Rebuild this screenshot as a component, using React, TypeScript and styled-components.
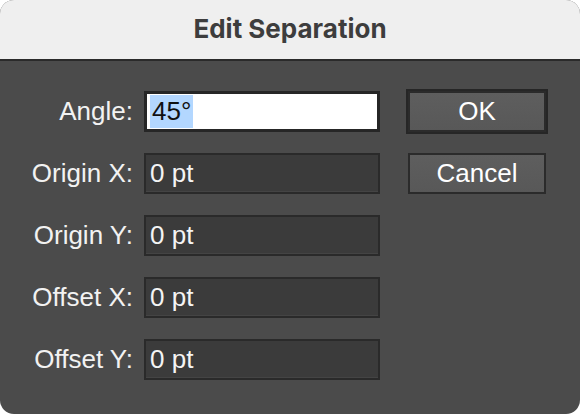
import React from "react";
import styled, { createGlobalStyle } from "styled-components";

const GlobalStyle = createGlobalStyle`
  html, body {
    margin: 0;
    padding: 0;
    background: #ffffff;
  }
  body {
    font-family: "Liberation Sans", Arial, sans-serif;
  }
`;

const Dialog = styled.div`
  width: 580px;
  height: 414px;
  border-radius: 14px;
  overflow: hidden;
  background: #4b4b4b;
  display: flex;
  flex-direction: column;
`;

const TitleBar = styled.div`
  height: 56px;
  flex: none;
  background: #efefef;
  border-bottom: 2px solid #2a2a2a;
  display: flex;
  align-items: center;
  justify-content: center;
  font-family: Inter, Roboto, "Liberation Sans", sans-serif;
  font-weight: 700;
  font-size: 26px;
  color: #3d3d3d;
  padding-bottom: 3px;
`;

const Body = styled.div`
  display: flex;
  align-items: flex-start;
  padding: 30px 0 0 8px;
`;

const Form = styled.div`
  display: grid;
  grid-template-columns: 125px 236px;
  column-gap: 11px;
  row-gap: 21px;
`;

const Label = styled.label`
  align-self: center;
  text-align: right;
  font-size: 26px;
  color: #f2f2f2;
  white-space: nowrap;
`;

const Field = styled.div<{ $active?: boolean }>`
  box-sizing: border-box;
  height: 41px;
  display: flex;
  align-items: center;
  padding-left: ${(p) => (p.$active ? "3px" : "4px")};
  font-size: 26px;
  background: ${(p) => (p.$active ? "#ffffff" : "#3b3b3b")};
  color: ${(p) => (p.$active ? "#111111" : "#f4f4f4")};
  border: ${(p) => (p.$active ? "3px solid #262626" : "2px solid #2a2a2a")};
  box-shadow: ${(p) => (p.$active ? "none" : "inset 0 -1px 0 #444444")};
`;

const Selected = styled.span`
  background: #b3d7ff;
  padding: 1px 2px;
`;

const Buttons = styled.div`
  display: flex;
  flex-direction: column;
  gap: 21px;
  margin-left: 28px;
`;

const Button = styled.button<{ $default?: boolean }>`
  box-sizing: border-box;
  width: 138px;
  height: 41px;
  font-family: "Liberation Sans", Arial, sans-serif;
  font-size: 26px;
  color: #ffffff;
  background: linear-gradient(#5e5e5e, #585858);
  border: 2px solid #2b2b2b;
  box-shadow: ${(p) => (p.$default ? "0 0 0 2px #262626" : "none")};
  padding: 0 0 1px;
`;

const rows = [
  { label: "Angle:", value: "45°", active: true },
  { label: "Origin X:", value: "0 pt" },
  { label: "Origin Y:", value: "0 pt" },
  { label: "Offset X:", value: "0 pt" },
  { label: "Offset Y:", value: "0 pt" },
];

export default function App() {
  return (
    <>
      <GlobalStyle />
      <Dialog>
        <TitleBar>Edit Separation</TitleBar>
        <Body>
          <Form>
            {rows.map((r) => (
              <React.Fragment key={r.label}>
                <Label>{r.label}</Label>
                <Field $active={r.active}>
                  {r.active ? <Selected>{r.value}</Selected> : r.value}
                </Field>
              </React.Fragment>
            ))}
          </Form>
          <Buttons>
            <Button $default>OK</Button>
            <Button>Cancel</Button>
          </Buttons>
        </Body>
      </Dialog>
    </>
  );
}
